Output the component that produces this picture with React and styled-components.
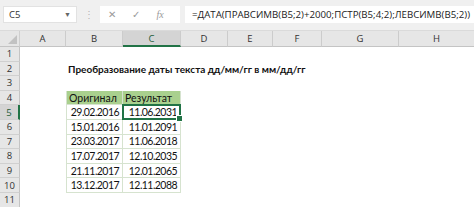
import React from "react";
import styled, { createGlobalStyle } from "styled-components";

const Global = createGlobalStyle`
  html, body { margin: 0; padding: 0; background: #ffffff; }
  body { width: 474px; height: 207px; overflow: hidden; font-family: "Open Sans", sans-serif; }
`;

const Page = styled.div`
  display: flex;
  flex-direction: column;
  width: 474px;
  height: 207px;
  overflow: hidden;
  background: #fff;
`;

const FormulaBar = styled.div`
  display: flex;
  align-items: center;
  height: 31px;
  box-sizing: border-box;
  padding: 6px 0 8px 3px;
  background: #f0f0f0;
  border-bottom: 1px solid #dadada;
`;

const NameBox = styled.div`
  display: flex;
  align-items: center;
  justify-content: space-between;
  width: 74px;
  height: 17px;
  box-sizing: border-box;
  padding: 0 5px 0 5px;
  background: #fff;
  border: 1px solid #e2e2e2;
  font-size: 9.5px;
  color: #333;
`;

const Arrow = styled.span`
  font-size: 7px;
  color: #666;
`;

const Dots = styled.div`
  width: 23px;
  text-align: center;
  font-size: 10px;
  color: #b5b5b5;
`;

const FxBox = styled.div`
  display: flex;
  align-items: center;
  width: 80px;
  height: 17px;
  background: #fff;
  margin-right: 5px;
`;

const FxButton = styled.div`
  width: 24px;
  display: flex;
  justify-content: center;
  align-items: center;
  color: #9a9a9a;
  font-size: 10px;
  font-family: ${(p) => (p.$serif ? '"Liberation Serif", serif' : '"Open Sans", sans-serif')};
  font-style: ${(p) => (p.$serif ? "italic" : "normal")};
`;

const FormulaInput = styled.div`
  flex: 1;
  height: 17px;
  display: flex;
  align-items: center;
  padding-left: 7px;
  background: #fff;
  font-size: 9.7px;
  color: #222;
  white-space: nowrap;
  overflow: hidden;
`;

const Sheet = styled.div`
  display: grid;
  grid-template-columns: 20px 46px 57px 58px 47px 45px 49px 77px 76px;
  grid-template-rows: 16px repeat(11, 14.6px);
`;

const Corner = styled.div`
  background: #e6e6e6;
  border-right: 1px solid #cfcfcf;
  border-bottom: 1px solid #c4c4c4;
  position: relative;
  &::after {
    content: "";
    position: absolute;
    right: 2px;
    bottom: 2px;
    border-style: solid;
    border-width: 0 0 9px 9px;
    border-color: transparent transparent #c2c2c2 transparent;
  }
`;

const ColHead = styled.div`
  display: flex;
  align-items: center;
  justify-content: center;
  box-sizing: border-box;
  background: ${(p) => (p.$active ? "#d4d4d4" : "#e6e6e6")};
  border-right: 1px solid #cccccc;
  border-bottom: ${(p) => (p.$active ? "2px solid #217346" : "1px solid #c4c4c4")};
  font-size: 9.5px;
  color: ${(p) => (p.$active ? "#1f5e3b" : "#333")};
`;

const RowHead = styled.div`
  display: flex;
  align-items: center;
  justify-content: center;
  box-sizing: border-box;
  background: ${(p) => (p.$active ? "#d4d4d4" : "#e6e6e6")};
  border-bottom: 1px solid #d0d0d0;
  border-right: ${(p) => (p.$active ? "2px solid #217346" : "1px solid #c4c4c4")};
  font-size: 9.5px;
  color: ${(p) => (p.$active ? "#1f5e3b" : "#333")};
`;

const Cell = styled.div`
  position: relative;
  display: flex;
  align-items: center;
  justify-content: ${(p) => (p.$right ? "flex-end" : "flex-start")};
  box-sizing: border-box;
  padding: 0 3px 0 2px;
  font-family: Lato, "Open Sans", sans-serif;
  font-size: ${(p) => (p.$bold ? "10px" : "10.5px")};
  letter-spacing: ${(p) => (p.$right ? "-0.55px" : "0")};
  font-weight: ${(p) => (p.$bold ? 700 : 400)};
  color: #111;
  white-space: nowrap;
  overflow: ${(p) => (p.$overflow ? "visible" : "hidden")};
  z-index: ${(p) => (p.$overflow ? 2 : 1)};
  background: ${(p) => (p.$head ? "#a9d08e" : "#fff")};
  border-right: ${(p) => (p.$table ? "1px solid #d6e3cf" : "none")};
  border-bottom: ${(p) => (p.$table ? "1px solid #d6e3cf" : "none")};
  border-left: ${(p) => (p.$first ? "1px solid #d6e3cf" : "none")};
`;

const Selection = styled.div`
  position: absolute;
  inset: -1px -1px -1px -1px;
  border: 2px solid #217346;
  pointer-events: none;
  &::after {
    content: "";
    position: absolute;
    right: -4px;
    bottom: -4px;
    width: 5px;
    height: 5px;
    background: #217346;
    border: 1px solid #fff;
  }
`;

const cols = ["A", "B", "C", "D", "E", "F", "G", "H"];
const data = [
  ["29.02.2016", "11.06.2031"],
  ["15.01.2016", "11.01.2091"],
  ["23.03.2017", "11.06.2018"],
  ["17.07.2017", "12.10.2035"],
  ["21.11.2017", "12.01.2065"],
  ["13.12.2017", "12.11.2088"],
];

function renderRow(r) {
  const cells = [];
  cells.push(
    <RowHead key={`h${r}`} $active={r === 5}>
      {r}
    </RowHead>
  );
  cols.forEach((c) => {
    const key = `${c}${r}`;
    if (r === 2 && c === "B") {
      cells.push(
        <Cell key={key} $bold $overflow>
          Преобразование даты текста дд/мм/гг в мм/дд/гг
        </Cell>
      );
      return;
    }
    if (r === 4 && (c === "B" || c === "C")) {
      cells.push(
        <Cell key={key} $head $table $first={c === "B"}>
          {c === "B" ? "Оригинал" : "Результат"}
        </Cell>
      );
      return;
    }
    if (r >= 5 && r <= 10 && (c === "B" || c === "C")) {
      const v = data[r - 5][c === "B" ? 0 : 1];
      cells.push(
        <Cell key={key} $right $table $first={c === "B"} $overflow={r === 5 && c === "C"}>
          {v}
          {r === 5 && c === "C" && <Selection />}
        </Cell>
      );
      return;
    }
    cells.push(<Cell key={key} />);
  });
  return cells;
}

export default function App() {
  const rows = [];
  for (let r = 1; r <= 11; r++) rows.push(...renderRow(r));
  return (
    <Page>
      <Global />
      <FormulaBar>
        <NameBox>
          <span>C5</span>
          <Arrow>▼</Arrow>
        </NameBox>
        <Dots>⋮</Dots>
        <FxBox>
          <FxButton>✕</FxButton>
          <FxButton>✓</FxButton>
          <FxButton $serif>fx</FxButton>
        </FxBox>
        <FormulaInput>=ДАТА(ПРАВСИМВ(B5;2)+2000;ПСТР(B5;4;2);ЛЕВСИМВ(B5;2))</FormulaInput>
      </FormulaBar>
      <Sheet>
        <Corner />
        {cols.map((c) => (
          <ColHead key={c} $active={c === "C"}>
            {c}
          </ColHead>
        ))}
        {rows}
      </Sheet>
    </Page>
  );
}
